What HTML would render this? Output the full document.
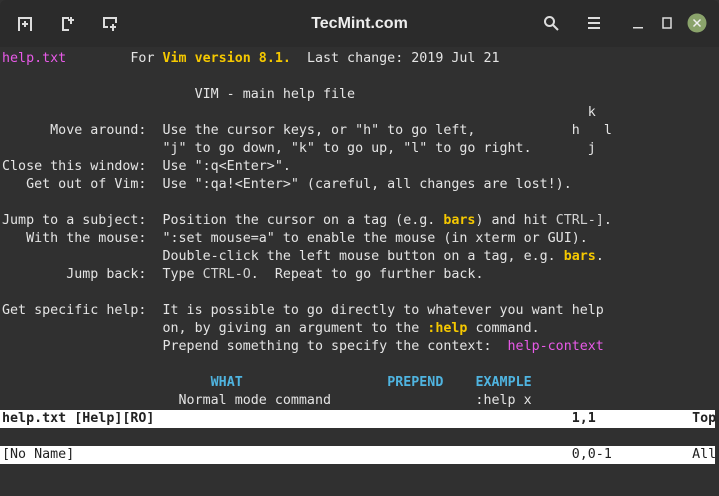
<!DOCTYPE html><html><head><style>
body{margin:0;width:719px;height:496px;background:#303030;overflow:hidden;font-family:"Liberation Mono",monospace}
.tb{position:absolute;left:0;top:0;width:719px;height:47px;background:#2b2b2b;border-radius:6px 6px 0 0}
.title{position:absolute;left:0;width:719px;top:15px;text-align:center;color:#eee;font:bold 16px "Liberation Sans",sans-serif}
pre{position:absolute;left:2px;top:50px;margin:0;font-size:13.33px;line-height:18px;color:#e4e4e4;white-space:pre}
.m{color:#e85ae8}.y{color:#f5c800;font-weight:bold}.c{color:#4fb4e0;font-weight:bold}.g{color:#d0d0d0}
.bar{position:absolute;left:0;width:715px;height:18px;background:#fff}
svg{position:absolute}
</style></head><body>
<div class="tb">
<svg style="left:17px;top:16px" width="16" height="16" viewBox="0 0 16 16" fill="none" stroke="#ddd" stroke-width="2"><path d="M2 15V2h12v13M8 5v6M5 8h6"/></svg>
<svg style="left:60px;top:15px" width="16" height="16" viewBox="0 0 16 16" fill="none" stroke="#ddd" stroke-width="2"><path d="M9 3H3v12h6M11 2v7M8 5h6"/></svg>
<svg style="left:102px;top:16px" width="16" height="16" viewBox="0 0 16 16" fill="none" stroke="#ddd" stroke-width="2"><path d="M6 11H2V2h12v5M11 8v7M8 11h6"/></svg>
<div class="title">TecMint.com</div>
<svg style="left:543px;top:15px" width="16" height="16" viewBox="0 0 16 16" fill="none" stroke="#ddd" stroke-width="2"><circle cx="6.5" cy="6.5" r="4.5"/><path d="M10 10l5 5"/></svg>
<svg style="left:588px;top:16px" width="12" height="14" viewBox="0 0 12 14" fill="#ddd"><rect y="1" width="12" height="2"/><rect y="6" width="12" height="2"/><rect y="11" width="12" height="2"/></svg>
<svg style="left:633px;top:20px" width="10" height="10"><rect y="7" width="10" height="1.5" fill="#ddd"/></svg>
<svg style="left:662px;top:17px" width="10" height="12" fill="none" stroke="#ddd" stroke-width="1.5"><rect x="1" y="1" width="8" height="10"/></svg>
<svg style="left:687px;top:13px" width="20" height="20"><circle cx="10" cy="10" r="9.5" fill="#8aa36b"/><path d="M6.5 6.5l7 7M13.5 6.5l-7 7" stroke="#eee" stroke-width="1.5"/></svg>
</div>
<div class="bar" style="top:410px"></div>
<div class="bar" style="top:446px"></div>
<pre><span class="m">help.txt</span>        For <span class="y">Vim version 8.1.</span>  Last change: 2019 Jul 21

                        VIM - main help file
                                                                         k
      Move around:  Use the cursor keys, or "h" to go left,            h   l
                    "j" to go down, "k" to go up, "l" to go right.       j
Close this window:  Use ":q&lt;Enter&gt;".
   Get out of Vim:  Use ":qa!&lt;Enter&gt;" (careful, all changes are lost!).

Jump to a subject:  Position the cursor on a tag (e.g. <span class="y">bars</span>) and hit <span class="g">CTRL-]</span>.
   With the mouse:  ":set mouse=a" to enable the mouse (in xterm or GUI).
                    Double-click the left mouse button on a tag, e.g. <span class="y">bars</span>.
        Jump back:  Type <span class="g">CTRL-O</span>.  Repeat to go further back.

Get specific help:  It is possible to go directly to whatever you want help
                    on, by giving an argument to the <span class="y">:help</span> command.
                    Prepend something to specify the context:  <span class="m">help-context</span>

                          <span class="c">WHAT</span>                  <span class="c">PREPEND</span>    <span class="c">EXAMPLE</span>
                      Normal mode command                  :help x
<b style="color:#222">help.txt [Help][RO]                                                    1,1            Top</b>

<span style="color:#222">[No Name]                                                              0,0-1          All</span>
</pre>
</body></html>
